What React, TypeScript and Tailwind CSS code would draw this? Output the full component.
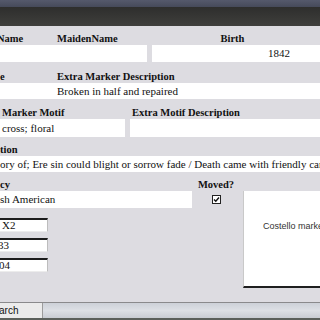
import React from "react";

function Label({ children, className = "" }: { children: React.ReactNode; className?: string }) {
  return (
    <div className={`h-[11px] flex items-center whitespace-nowrap text-[10.5px] font-bold leading-none text-[#111] ${className}`}>
      {children}
    </div>
  );
}

function Field({ children, className = "" }: { children?: React.ReactNode; className?: string }) {
  return (
    <div className={`bg-white flex items-center whitespace-nowrap overflow-hidden text-[11px] leading-none text-[#111] ${className}`}>
      {children}
    </div>
  );
}

function SmallBox({ value, className = "" }: { value: string; className?: string }) {
  return (
    <div
      className={`h-[14px] w-[48px] bg-white border-t-2 border-t-[#1c1c1c] border-r border-r-[#bdbdbd] border-b border-b-[#ececec] flex items-center text-[11px] leading-none text-[#111] ${className}`}
    >
      {value}
    </div>
  );
}

export default function App() {
  return (
    <div className="w-[320px] h-[320px] overflow-hidden flex flex-col bg-[#dddce1] [font-family:'Liberation_Serif','Times_New_Roman',serif]">
      {/* window title bar */}
      <div className="h-[7px] bg-gradient-to-b from-[#55596c] to-[#464a5a]" />
      <div className="h-[19px] bg-gradient-to-b from-[#2e2e2d] to-[#3f3f3c]" />

      {/* form */}
      <div className="flex flex-col">
        <div className="mt-[8px] flex">
          <Label className="w-[57px] -ml-[3px]">Name</Label>
          <Label className="w-[95px] pl-[3px]">MaidenName</Label>
          <Label className="flex-1 justify-center pr-[4px]">Birth</Label>
        </div>
        <div className="flex gap-[5px]">
          <Field className="h-[17px] w-[147px]" />
          <Field className="h-[17px] flex-1 justify-end pr-[30px]">1842</Field>
        </div>

        <div className="mt-[10px] flex">
          <Label className="w-[57px]">e</Label>
          <Label>Extra Marker Description</Label>
        </div>
        <Field className="h-[16px] pl-[57px]">Broken in half and repaired</Field>

        <div className="mt-[9px] flex">
          <Label className="w-[132px] pl-[2px]">Marker Motif</Label>
          <Label>Extra Motif Description</Label>
        </div>
        <div className="flex gap-[5px]">
          <Field className="h-[18px] w-[125px] pl-[2px]">cross; floral</Field>
          <Field className="h-[18px] flex-1" />
        </div>

        <div className="mt-[8px]">
          <Label>tion</Label>
        </div>
        <Field className="h-[16px]">ory of; Ere sin could blight or sorrow fade / Death came with friendly care</Field>
      </div>

      {/* lower section */}
      <div className="mt-[8px] flex-1 flex">
        <div className="w-[192px] flex flex-col">
          <Label>cy</Label>
          <Field className="h-[17px]">sh American</Field>
          <div className="mt-[10px] flex flex-col gap-[6px]">
            <SmallBox value="X2" className="pl-[2px]" />
            <SmallBox value="33" className="-indent-[2px]" />
            <SmallBox value="04" className="-indent-[1px]" />
          </div>
        </div>

        <div className="w-[48px] flex flex-col items-center">
          <Label>Moved?</Label>
          <div className="mt-[4px] w-[9px] h-[9px] bg-white border border-[#222] flex items-center justify-center">
            <svg width="7" height="7" viewBox="0 0 7 7">
              <path d="M1 3.5 L2.8 5.3 L6 1.5" stroke="#111" strokeWidth="1.4" fill="none" />
            </svg>
          </div>
        </div>

        <div className="ml-[3px] mt-[11px] w-[77px] h-[97px] bg-white border-l border-l-[#c9c9c9] border-b-2 border-b-[#1f1f1f] overflow-hidden">
          <div className="mt-[29px] pl-[19px] whitespace-nowrap text-[9px] text-[#333] [font-family:'Liberation_Sans',Arial,sans-serif]">
            Costello marker
          </div>
        </div>
      </div>

      {/* bottom tab strip */}
      <div className="h-px bg-[#8a8a8c]" />
      <div className="h-[15px] flex bg-gradient-to-b from-[#cdd1d8] via-[#dde0e5] to-[#c9cdd3]">
        <div className="w-[43px] bg-[#ebebeb] border-r border-r-[#9c9c9c] flex items-center text-[10px] leading-none text-[#111] -indent-[1px] [font-family:'Liberation_Sans',Arial,sans-serif]">
          arch
        </div>
      </div>
      <div className="h-[2px] bg-[#5b605b]" />
    </div>
  );
}
